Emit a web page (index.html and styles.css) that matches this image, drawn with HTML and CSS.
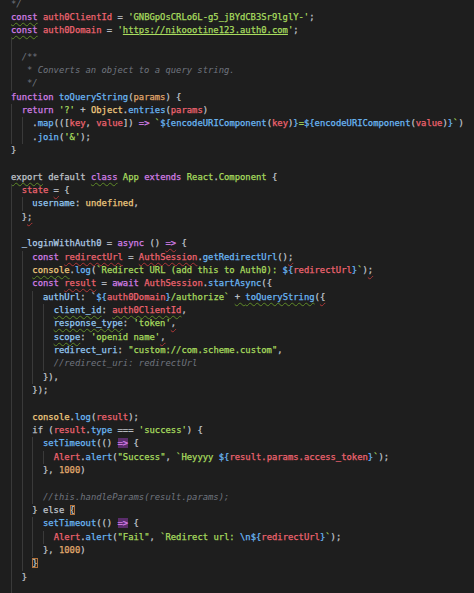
FILE: index.html
```html
<!DOCTYPE html>
<html>
<head>
<meta charset="utf-8">
<link rel="stylesheet" href="styles.css">
</head>
<body>
<div class="editor">
<div class="ln"><span class="c">*/</span></div>
<div class="ln"><span class="k wg">const</span> <span class="v">auth0ClientId</span> <span class="p">=</span> <span class="s">'GNBGpOsCRLo6L-g5_jBYdCB3Sr9lglY-'</span><span class="p">;</span></div>
<div class="ln"><span class="k wg">const</span> <span class="v">auth0Domain</span> <span class="p">=</span> <span class="s">'<span class="u">https://nikoootine123.auth0.com</span>'</span><span class="p">;</span></div>
<div class="ln"><span class="g"></span></div>
<div class="ln"><span class="g"></span><span class="c">/**</span></div>
<div class="ln"><span class="g"></span><span class="c"> * Converts an object to a query string.</span></div>
<div class="ln"><span class="g"></span><span class="c"> */</span></div>
<div class="ln"><span class="k">function</span> <span class="f">toQueryString</span><span class="p">(</span><span class="a">params</span><span class="p">) {</span></div>
<div class="ln"><span class="g"></span><span class="k">return</span> <span class="s">'?'</span> <span class="p">+</span> <span class="t">Object</span><span class="p">.</span><span class="f">entries</span><span class="p">(</span><span class="v">params</span><span class="p">)</span></div>
<div class="ln"><span class="g"></span><span class="g"></span><span class="p">.</span><span class="f">map</span><span class="p">(([</span><span class="v">key</span><span class="p">, </span><span class="v">value</span><span class="p">])</span> <span class="k">=&gt;</span> <span class="s">`</span><span class="f">${encodeURIComponent</span><span class="p">(</span><span class="v">key</span><span class="p">)</span><span class="f">}</span><span class="s">=</span><span class="f">${encodeURIComponent</span><span class="p">(</span><span class="v">value</span><span class="p">)</span><span class="f">}</span><span class="s">`</span><span class="p">)</span></div>
<div class="ln"><span class="g"></span><span class="g"></span><span class="p">.</span><span class="f">join</span><span class="p">(</span><span class="s">'&amp;'</span><span class="p">);</span></div>
<div class="ln"><span class="p">}</span></div>
<div class="ln"></div>
<div class="ln"><span class="p wg">export</span> <span class="p">default</span> <span class="k wg">class</span> <span class="s">App</span> <span class="k">extends</span> <span class="s">React</span><span class="p">.</span><span class="s">Component</span> <span class="p">{</span></div>
<div class="ln"><span class="g"></span><span class="v">state</span> <span class="p wr">=</span> <span class="p">{</span></div>
<div class="ln"><span class="g"></span><span class="g"></span><span class="pr">username</span><span class="p">:</span> <span class="t">undefined</span><span class="p">,</span></div>
<div class="ln"><span class="g"></span><span class="p">}<span class="wr">;</span></span></div>
<div class="ln"><span class="g"></span></div>
<div class="ln"><span class="g"></span><span class="pl">_loginWithAuth0</span> <span class="p">=</span> <span class="k">async</span> <span class="p">()</span> <span class="k wr">=&gt;</span> <span class="p">{</span></div>
<div class="ln"><span class="g"></span><span class="g"></span><span class="k">const</span> <span class="v wr">redirectUrl</span> <span class="p">=</span> <span class="v wr">AuthSession</span><span class="p">.</span><span class="f">getRedirectUrl</span><span class="p">()<span class="wr">;</span></span></div>
<div class="ln"><span class="g"></span><span class="g"></span><span class="t wg">console</span><span class="p">.</span><span class="f">log</span><span class="p">(</span><span class="s">`Redirect URL (add this to Auth0): </span><span class="f">${</span><span class="v">redirectUrl</span><span class="f">}</span><span class="s">`</span><span class="p">)<span class="wr">;</span></span></div>
<div class="ln"><span class="g"></span><span class="g"></span><span class="k">const</span> <span class="v wr">result</span> <span class="p">=</span> <span class="k">await</span> <span class="v">AuthSession</span><span class="p">.</span><span class="f">startAsync</span><span class="p">({</span></div>
<div class="ln"><span class="g"></span><span class="g"></span><span class="g"></span><span class="pr">authUrl</span><span class="p">:</span> <span class="p">`</span><span class="f">${</span><span class="v">auth0Domain</span><span class="f">}</span><span class="s">/authorize`</span> <span class="p wg">+ </span><span class="f wg">toQueryString</span><span class="p">(<span class="wr">{</span></span></div>
<div class="ln"><span class="g"></span><span class="g"></span><span class="g"></span><span class="g"></span><span class="pr wg">client_id</span><span class="p">:</span> <span class="v wg">auth0ClientId</span><span class="p">,</span></div>
<div class="ln"><span class="g"></span><span class="g"></span><span class="g"></span><span class="g"></span><span class="pr wg">response_type</span><span class="p">:</span> <span class="s">'token'</span><span class="p wr">,</span></div>
<div class="ln"><span class="g"></span><span class="g"></span><span class="g"></span><span class="g"></span><span class="pr wg">scope</span><span class="p">:</span> <span class="s">'openid name'</span><span class="p wr">,</span></div>
<div class="ln"><span class="g"></span><span class="g"></span><span class="g"></span><span class="g"></span><span class="pr">redirect_uri</span><span class="p">:</span> <span class="s">"custom://com.scheme.custom"</span><span class="p">,</span></div>
<div class="ln"><span class="g"></span><span class="g"></span><span class="g"></span><span class="g"></span><span class="c">//redirect_uri: redirectUrl</span></div>
<div class="ln"><span class="g"></span><span class="g"></span><span class="g"></span><span class="p">}),</span></div>
<div class="ln"><span class="g"></span><span class="g"></span><span class="p">});</span></div>
<div class="ln"><span class="g"></span><span class="g"></span></div>
<div class="ln"><span class="g"></span><span class="g"></span><span class="t">console</span><span class="p">.</span><span class="f">log</span><span class="p">(</span><span class="v">result</span><span class="p">);</span></div>
<div class="ln"><span class="g"></span><span class="g"></span><span class="p">if (</span><span class="v">result</span><span class="p">.</span><span class="f">type</span> <span class="p">===</span> <span class="s">'success'</span><span class="p">) {</span></div>
<div class="ln"><span class="g"></span><span class="g"></span><span class="g"></span><span class="f">setTimeout</span><span class="p">(()</span> <span class="k hl">=&gt;</span> <span class="p">{</span></div>
<div class="ln"><span class="g"></span><span class="g"></span><span class="g"></span><span class="g"></span><span class="v">Alert</span><span class="p">.</span><span class="f">alert</span><span class="p">(</span><span class="s">"Success"</span><span class="p">,</span> <span class="s">`Heyyyy </span><span class="f">${</span><span class="v">result.params.access_token</span><span class="f">}</span><span class="s">`</span><span class="p">);</span></div>
<div class="ln"><span class="g"></span><span class="g"></span><span class="g"></span><span class="p">}, </span><span class="n">1000</span><span class="p">)</span></div>
<div class="ln"><span class="g"></span><span class="g"></span><span class="g"></span></div>
<div class="ln"><span class="g"></span><span class="g"></span><span class="g"></span><span class="c">//this.handleParams(result.params);</span></div>
<div class="ln"><span class="g"></span><span class="g"></span><span class="p">} else </span><span class="p bm">{</span></div>
<div class="ln"><span class="g"></span><span class="g"></span><span class="g"></span><span class="f">setTimeout</span><span class="p">(()</span> <span class="k hl">=&gt;</span> <span class="p">{</span></div>
<div class="ln"><span class="g"></span><span class="g"></span><span class="g"></span><span class="g"></span><span class="v">Alert</span><span class="p">.</span><span class="f">alert</span><span class="p">(</span><span class="s">"Fail"</span><span class="p">,</span> <span class="s">`Redirect url: </span><span class="f">\n${</span><span class="v">redirectUrl</span><span class="f">}</span><span class="s">`</span><span class="p">);</span></div>
<div class="ln"><span class="g"></span><span class="g"></span><span class="g"></span><span class="p">}, </span><span class="n">1000</span><span class="p">)</span></div>
<div class="ln"><span class="g"></span><span class="g"></span><span class="p bm">}</span></div>
<div class="ln"><span class="g"></span><span class="p">}</span></div>
<div class="ln"><span class="g"></span></div>
</div>
</body>
</html>
```
FILE: styles.css
```css
html, body {
  margin: 0;
  padding: 0;
  background: #1e1e1e;
}
.editor {
  margin-top: -2.5px;
  padding-left: 11px;
  font-family: "DejaVu Sans Mono", "Liberation Mono", monospace;
  font-size: 8.86px;
  line-height: 13.33px;
  color: #c0c5cc;
  -webkit-text-stroke: 0.25px;
}
.ln {
  height: 13.33px;
  white-space: pre;
}
.g {
  display: inline-block;
  width: 10.67px;
  height: 13.33px;
  vertical-align: top;
  box-sizing: border-box;
  border-left: 1px solid #3a3a3a;
}
.k { color: #d37ee6; }
.v { color: #ee6470; }
.s { color: #a8dc5e; }
.f { color: #6bb8f5; }
.c { color: #70757e; font-style: italic; -webkit-text-stroke: 0; }
.t { color: #efc97f; }
.n { color: #e0a86c; }
.p { color: #c0c5cc; }
.a { color: #e0a86c; }
.pr { color: #94c8f2; }
.pl { color: #b0cce6; }
.u { text-decoration: underline; }
.wg {
  text-decoration: underline wavy #5f8a28;
  text-decoration-thickness: 1px;
  text-underline-offset: 2px;
}
.wr {
  text-decoration: underline wavy #b03636;
  text-decoration-thickness: 1px;
  text-underline-offset: 2px;
}
.hl { background: #5a2d6b; }
.bm {
  outline: 1px solid #b0703a;
  outline-offset: -1px;
}
```
